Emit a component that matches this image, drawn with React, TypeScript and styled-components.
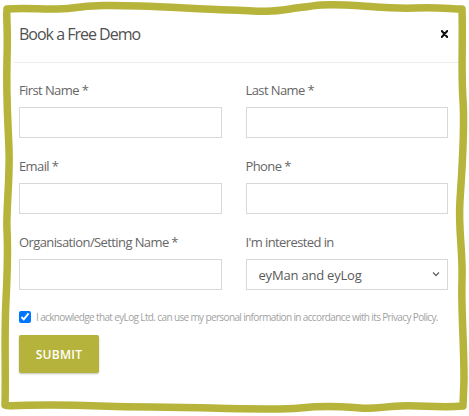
import React from "react";
import styled, { createGlobalStyle } from "styled-components";

const GlobalStyle = createGlobalStyle`
  html, body { margin: 0; padding: 0; background: #ffffff; }
  * { box-sizing: border-box; }
`;

const Page = styled.div`
  position: relative;
  width: 469px;
  height: 416px;
  overflow: hidden;
  background: #ffffff;
  font-family: "Open Sans", "Liberation Sans", sans-serif;
`;

const Header = styled.header`
  height: 63px;
  margin: 0 9px 0 14px;
  padding: 6px 12px 0 5px;
  display: flex;
  align-items: center;
  justify-content: space-between;
  border-bottom: 1px solid #ececec;
`;

const Title = styled.h1`
  margin: 0;
  font-size: 16px;
  font-weight: 400;
  color: #505050;
  line-height: 20px;
  letter-spacing: -1px;
`;

const Close = styled.button`
  border: 0;
  background: none;
  padding: 0;
  width: 7px;
  height: 8px;
  display: flex;
  cursor: pointer;
`;

const Body = styled.form`
  padding: 18px 21px 0 19px;
`;

const Grid = styled.div`
  display: grid;
  grid-template-columns: minmax(0, 1fr) minmax(0, 1fr);
  column-gap: 24px;
  row-gap: 19px;
`;

const Field = styled.div`
  display: flex;
  flex-direction: column;
  min-width: 0;
`;

const Label = styled.label`
  font-size: 13px;
  line-height: 18px;
  color: #666;
  margin-bottom: 8px;
  letter-spacing: -0.6px;
`;

const Input = styled.input`
  width: 100%;
  height: 31px;
  border: 1px solid #d8d8d8;
  background: #fff;
  padding: 0 12px;
  font: inherit;
`;

const SelectWrap = styled.div`
  position: relative;
`;

const Select = styled.select`
  appearance: none;
  width: 100%;
  height: 31px;
  border: 1px solid #d8d8d8;
  border-radius: 0;
  background: #fff;
  padding: 0 12px;
  font-family: "Open Sans", "Liberation Sans", sans-serif;
  font-size: 13px;
  letter-spacing: -0.2px;
  color: #5a5a5a;
`;

const Chevron = styled.svg`
  position: absolute;
  right: 8px;
  top: 12px;
  pointer-events: none;
`;

const Consent = styled.label`
  display: flex;
  align-items: center;
  gap: 5px;
  margin-top: 20px;
  font-size: 10px;
  letter-spacing: -0.63px;
  color: #a2a2a2;
  white-space: nowrap;
`;

const Check = styled.input`
  width: 12px;
  height: 12px;
  margin: 0;
`;

const Submit = styled.button`
  display: block;
  margin-top: 11px;
  width: 80px;
  height: 38px;
  border: 0;
  border-radius: 2px;
  background: #b5b33b;
  color: #fff;
  font-family: "Open Sans", "Liberation Sans", sans-serif;
  font-size: 12px;
  font-weight: 600;
  letter-spacing: 0.3px;
  box-shadow: 0 1px 2px rgba(0, 0, 0, 0.25);
`;

const Frame = styled.svg`
  position: absolute;
  inset: 0;
  pointer-events: none;
`;

const framePath =
  "M7 9 C 30 7, 50 11, 72 8 S 110 5, 140 6 S 200 9, 230 10 S 262 13, 290 9 S 320 4, 345 5 S 390 9, 415 8 S 450 9, 462 9 " +
  "C 463 40, 461 70, 463 100 S 462 170, 460 200 S 463 250, 462 280 S 464 340, 464 380 L 463 406 " +
  "C 440 408, 420 405, 400 406 S 375 409, 360 408 S 330 405, 300 408 S 200 407, 150 407 S 100 405, 50 405 S 15 407, 5 405 " +
  "C 6 370, 4 340, 6 300 S 8 250, 7 230 S 10 180, 9 150 S 6 100, 7 60 S 6 20, 7 9 Z";

export default function App() {
  return (
    <Page>
      <GlobalStyle />
      <Header>
        <Title>Book a Free Demo</Title>
        <Close type="button" aria-label="Close">
          <svg width="7" height="8" viewBox="0 0 7 8">
            <path d="M0.8 1 L6.2 7 M6.2 1 L0.8 7" stroke="#111" strokeWidth="2" strokeLinecap="round" />
          </svg>
        </Close>
      </Header>
      <Body onSubmit={(e) => e.preventDefault()}>
        <Grid>
          <Field>
            <Label>First Name *</Label>
            <Input type="text" />
          </Field>
          <Field>
            <Label>Last Name *</Label>
            <Input type="text" />
          </Field>
          <Field>
            <Label>Email *</Label>
            <Input type="email" />
          </Field>
          <Field>
            <Label>Phone *</Label>
            <Input type="tel" />
          </Field>
          <Field>
            <Label>Organisation/Setting Name *</Label>
            <Input type="text" />
          </Field>
          <Field>
            <Label>I'm interested in</Label>
            <SelectWrap>
              <Select defaultValue="both">
                <option value="both">eyMan and eyLog</option>
                <option value="eylog">eyLog</option>
                <option value="eyman">eyMan</option>
              </Select>
              <Chevron width="8" height="6" viewBox="0 0 8 6">
                <path d="M1 1.5 L4 4.5 L7 1.5" fill="none" stroke="#666" strokeWidth="1.3" />
              </Chevron>
            </SelectWrap>
          </Field>
        </Grid>
        <Consent>
          <Check type="checkbox" defaultChecked />
          I acknowledge that eyLog Ltd. can use my personal information in accordance with its Privacy Policy.
        </Consent>
        <Submit type="submit">SUBMIT</Submit>
      </Body>
      <Frame width="469" height="416" viewBox="0 0 469 416">
        <path d={framePath} fill="none" stroke="#b6b43a" strokeWidth="7.5" strokeLinejoin="round" />
      </Frame>
    </Page>
  );
}
